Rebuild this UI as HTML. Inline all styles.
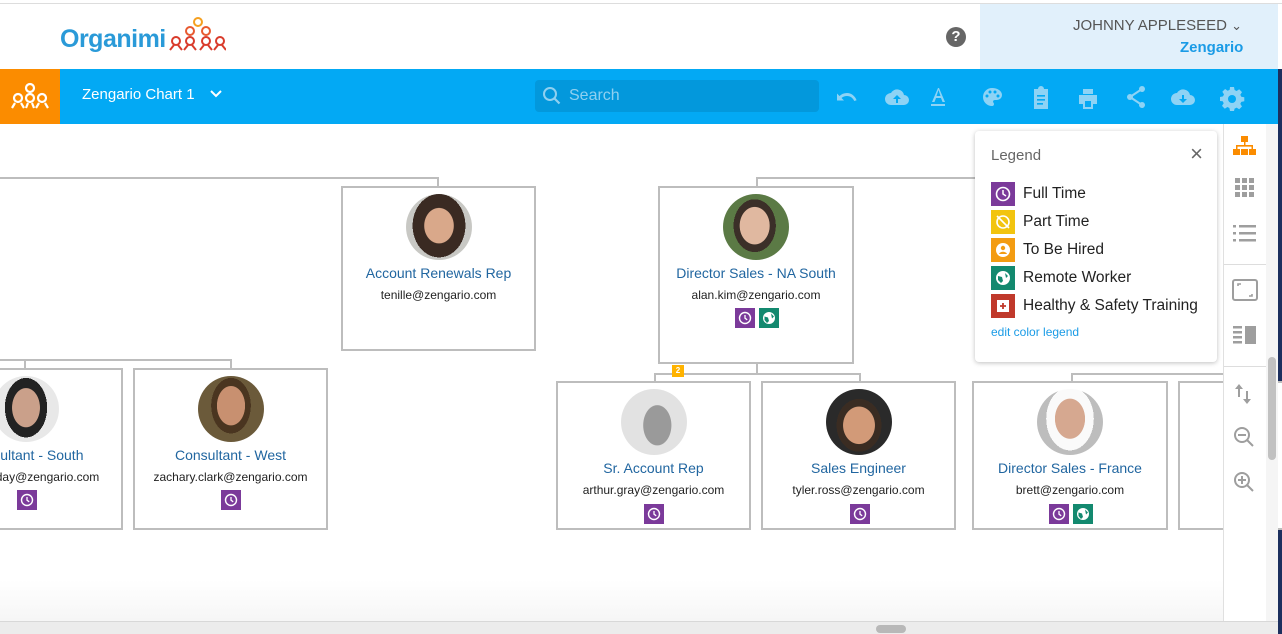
<!DOCTYPE html>
<html><head><meta charset="utf-8"><style>
*{box-sizing:border-box;margin:0;padding:0}
body{width:1282px;height:634px;overflow:hidden;position:relative;background:#fff;font-family:"Liberation Sans",Arial,sans-serif}
.a{position:absolute}
.card{position:absolute;border:2px solid #bdbdbd;background:#fff;text-align:center}
.av{position:absolute;border-radius:50%;width:66px;height:66px;left:50%;margin-left:-33px;top:6px;overflow:hidden}
.t{position:absolute;left:-40px;right:-40px;color:#2166a0;font-size:14px;white-space:nowrap}
.e{position:absolute;left:-40px;right:-40px;color:#222;font-size:12px;white-space:nowrap}
.ic{position:absolute;width:20px;height:20px;top:0;display:flex;align-items:center;justify-content:center}
.ln{position:absolute;background:#bdbdbd}
.lg{display:flex;align-items:center;height:28px;font-size:15.5px;color:#222;white-space:nowrap}
.sw{width:24px;height:24px;margin-right:8px;display:flex;align-items:center;justify-content:center;flex:none}
</style></head><body>
<svg width="0" height="0" style="position:absolute"><defs>
<g id="clk"><circle cx="7" cy="7" r="5.5" stroke="#fff" stroke-width="1.4" fill="none"/><path d="M7 4v3.2l2.2 1.6" stroke="#fff" stroke-width="1.3" fill="none"/></g>
<g id="glb"><circle cx="7" cy="7" r="6" fill="#fff"/><path d="M2.5 5.5l3.5 1 1 3.5-2 2-2.5-3zM9 2.5l3 3-2 2z" fill="#13896f"/></g>
</defs></svg>
<!-- top bar -->
<div class="a" style="left:0;top:0;width:1282px;height:4px;background:#fff;border-bottom:1px solid #ddd"></div>
<div class="a" style="left:60px;top:25px;font-size:25px;color:#2a9ad8;font-weight:bold;letter-spacing:-0.5px">Organimi</div>
<svg class="a" style="left:168px;top:16px" width="58" height="36" viewBox="0 0 58 36" fill="none" stroke-width="2">
<circle cx="30" cy="6" r="4" stroke="#f5a020"/>
<circle cx="22" cy="15" r="4" stroke="#e85a30"/><circle cx="38" cy="15" r="4" stroke="#e85a30"/>
<circle cx="8" cy="25" r="4" stroke="#d93b2b"/><circle cx="22" cy="25" r="4" stroke="#d93b2b"/><circle cx="38" cy="25" r="4" stroke="#d93b2b"/><circle cx="52" cy="25" r="4" stroke="#d93b2b"/>
<path d="M2 34l4-5M14 34l-4-5M16 34l4-5M28 34l-4-5M32 34l4-5M44 34l-4-5M46 34l4-5M58 34l-4-5" stroke="#d93b2b"/>
</svg>
<div class="a" style="left:946px;top:27px;width:20px;height:20px;border-radius:50%;background:#666;color:#fff;font-weight:bold;font-size:15px;text-align:center;line-height:20px">?</div>
<div class="a" style="left:980px;top:4px;width:298px;height:65px;background:#e1f0fb"></div>
<div class="a" style="right:40px;top:17px;font-size:15px;color:#555">JOHNNY APPLESEED <span style="font-size:13px">&#8964;</span></div>
<div class="a" style="left:1180px;top:39px;font-size:15px;color:#1a9be6;font-weight:bold">Zengario</div>
<div class="a" style="left:1278px;top:69px;width:4px;height:565px;background:#1c2f5e"></div>
<!-- toolbar -->
<div class="a" style="left:0;top:69px;width:1278px;height:55px;background:#03a9f4"></div>
<div class="a" style="left:0;top:69px;width:60px;height:55px;background:#fb8c00"></div>
<svg class="a" style="left:10px;top:82px" width="40" height="28" viewBox="0 0 40 28" fill="none" stroke="#fff" stroke-width="2.2">
<circle cx="20" cy="6" r="4"/><circle cx="8" cy="16" r="4"/><circle cx="20" cy="16" r="4"/><circle cx="32" cy="16" r="4"/>
<path d="M2 26l3-5M14 26l-3-5M16 26l2-5M24 26l-2-5M26 26l3-5M38 26l-3-5"/></svg>
<div class="a" style="left:82px;top:86px;font-size:15px;color:#fff">Zengario Chart 1</div>
<svg class="a" style="left:209px;top:89px" width="14" height="10"><path d="M2 2l5 5 5-5" stroke="#fff" stroke-width="2" fill="none"/></svg>
<div class="a" style="left:535px;top:80px;width:284px;height:32px;border-radius:4px;background:#0398dc"></div>
<svg class="a" style="left:542px;top:86px" width="20" height="20"><circle cx="8" cy="8" r="6" stroke="#8fd0f0" stroke-width="2" fill="none"/><path d="M12.5 12.5l5 5" stroke="#8fd0f0" stroke-width="2.2"/></svg>
<div class="a" style="left:569px;top:87px;font-size:16px;color:#8fd0f0">Search</div>
<svg class="a" style="left:830px;top:80px" width="420" height="34" fill="#8ed3f5">
<path transform="translate(5,7)" d="M12 6c-3 0-5.5 1-7.5 3L2 6.5v7h7L6.5 11c1.5-1.3 3.4-2 5.5-2 3.3 0 6 2 7.2 5l2.4-.8C20 9 16.3 6 12 6z"/>
<g transform="translate(55,5)"><path d="M19 10a7 7 0 0 0-13-2 6 6 0 0 0 0 12h13a5 5 0 0 0 0-10z"/><path d="M12 10l-4 4h3v4h2v-4h3z" fill="#03a9f4"/></g>
<path d="M108 8l-6 14h2.5l1.5-4h5l1.5 4H115l-6-14zm-1.5 8l2-6 2 6z M101 24h14v2h-14z"/>
<g transform="translate(150,5)"><path d="M12 3a9 9 0 0 0 0 18c1.5 0 2-1 2-2s-1-1.5-1-2.5 1-1.5 2-1.5h2a5 5 0 0 0 5-5c0-4-4.5-7-10-7z"/><circle cx="7" cy="11" r="1.5" fill="#03a9f4"/><circle cx="10" cy="7" r="1.5" fill="#03a9f4"/><circle cx="15" cy="7" r="1.5" fill="#03a9f4"/><circle cx="18" cy="11" r="1.5" fill="#03a9f4"/></g>
<g transform="translate(199,5)"><path d="M5 4h4a3 3 0 0 1 6 0h4v20H5z"/><path d="M8 10h8v1.6H8zM8 14h8v1.6H8zM8 18h6v1.6H8z" fill="#03a9f4"/></g>
<g transform="translate(246,5)"><path d="M7 4h10v5H7zM3 10h18v9h-4v5H7v-5H3z"/><path d="M9 16h6v6H9z" fill="#03a9f4"/></g>
<g transform="translate(294,5)"><circle cx="18" cy="4" r="3"/><circle cx="6" cy="12" r="3"/><circle cx="18" cy="20" r="3"/><path d="M6 12L18 4M6 12l12 8" stroke="#8ed3f5" stroke-width="2"/></g>
<g transform="translate(341,5)"><path d="M19 10a7 7 0 0 0-13-2 6 6 0 0 0 0 12h13a5 5 0 0 0 0-10z"/><path d="M12 18l-4-4h3v-4h2v4h3z" fill="#03a9f4"/></g>
<g transform="translate(390,5)"><path d="M10 2h4l.6 3 2 1 2.6-1.7 2.8 2.8-1.7 2.6 1 2 3 .6v4l-3 .6-1 2 1.7 2.6-2.8 2.8-2.6-1.7-2 1L14 26h-4l-.6-3-2-1-2.6 1.7-2.8-2.8 1.7-2.6-1-2L0 16v-4l3-.6 1-2L2.3 6.8l2.8-2.8 2.6 1.7 2-1z"/><circle cx="12" cy="14" r="4" fill="#03a9f4"/></g>
</svg>
<!-- connectors -->
<div class="ln" style="left:0;top:177px;width:439px;height:2px"></div>
<div class="ln" style="left:437px;top:177px;width:2px;height:10px"></div>
<div class="ln" style="left:756px;top:177px;width:220px;height:2px"></div>
<div class="ln" style="left:756px;top:177px;width:2px;height:10px"></div>
<div class="ln" style="left:0;top:359px;width:232px;height:2px"></div>
<div class="ln" style="left:24px;top:359px;width:2px;height:10px"></div>
<div class="ln" style="left:230px;top:359px;width:2px;height:10px"></div>
<div class="ln" style="left:756px;top:362px;width:2px;height:12px"></div>
<div class="ln" style="left:654px;top:373px;width:207px;height:2px"></div>
<div class="ln" style="left:654px;top:373px;width:2px;height:9px"></div>
<div class="ln" style="left:859px;top:373px;width:2px;height:9px"></div>
<div class="ln" style="left:1071px;top:373px;width:152px;height:2px"></div>
<div class="ln" style="left:1071px;top:373px;width:2px;height:9px"></div>
<div class="a" style="left:672px;top:365px;width:12px;height:12px;background:#ffb300;color:#fff;font-size:8px;font-weight:bold;text-align:center;line-height:12px">2</div>
<!-- cards -->
<div class="card" style="left:341px;top:186px;width:195px;height:165px">
<div class="av" style="background:radial-gradient(ellipse 40% 48% at 50% 48%,#d9a88a 0 55%,#3a2a22 57% 100%,#c8c8c4 100%)"></div>
<div class="t" style="top:77px">Account Renewals Rep</div><div class="e" style="top:100px">tenille@zengario.com</div></div>

<div class="card" style="left:658px;top:186px;width:196px;height:178px">
<div class="av" style="background:radial-gradient(ellipse 32% 40% at 48% 48%,#e0b8a0 0 70%,#3b2f28 72% 100%,#5b7a45 100%)"></div>
<div class="t" style="top:77px">Director Sales - NA South</div><div class="e" style="top:100px">alan.kim@zengario.com</div>
<div class="ic" style="left:75px;top:120px;background:#7b3a9a"><svg width="14" height="14"><use href="#clk"/></svg></div><div class="ic" style="left:99px;top:120px;background:#13896f"><svg width="14" height="14"><use href="#glb"/></svg></div></div>

<div class="card" style="left:-72px;top:368px;width:195px;height:162px">
<div class="av" style="background:radial-gradient(ellipse 32% 45% at 50% 48%,#caa08a 0 65%,#222 67% 100%,#e8e8e8 100%)"></div>
<div class="t" style="top:77px">Consultant - South</div><div class="e" style="top:100px">jake.holiday@zengario.com</div>
<div class="ic" style="left:87px;top:120px;background:#7b3a9a"><svg width="14" height="14"><use href="#clk"/></svg></div></div>

<div class="card" style="left:133px;top:368px;width:195px;height:162px">
<div class="av" style="background:radial-gradient(ellipse 30% 42% at 50% 45%,#c89070 0 70%,#4a3520 72% 100%,#6b5a3a 100%)"></div>
<div class="t" style="top:77px">Consultant - West</div><div class="e" style="top:100px">zachary.clark@zengario.com</div>
<div class="ic" style="left:86px;top:120px;background:#7b3a9a"><svg width="14" height="14"><use href="#clk"/></svg></div></div>

<div class="card" style="left:556px;top:381px;width:195px;height:149px">
<div class="av" style="background:radial-gradient(ellipse 35% 50% at 55% 55%,#9a9a9a 0 60%,#e2e2e2 62%)"></div>
<div class="t" style="top:77px">Sr. Account Rep</div><div class="e" style="top:100px">arthur.gray@zengario.com</div>
<div class="ic" style="left:86px;top:121px;background:#7b3a9a"><svg width="14" height="14"><use href="#clk"/></svg></div></div>

<div class="card" style="left:761px;top:381px;width:195px;height:149px">
<div class="av" style="background:radial-gradient(ellipse 34% 40% at 50% 55%,#d29a78 0 70%,#3a2c22 72% 100%,#2a2a2a 100%)"></div>
<div class="t" style="top:77px">Sales Engineer</div><div class="e" style="top:100px">tyler.ross@zengario.com</div>
<div class="ic" style="left:87px;top:121px;background:#7b3a9a"><svg width="14" height="14"><use href="#clk"/></svg></div></div>

<div class="card" style="left:972px;top:381px;width:196px;height:149px">
<div class="av" style="background:radial-gradient(ellipse 30% 40% at 50% 45%,#d6a890 0 75%,#fafafa 77% 120%,#bdbdbd 120%)"></div>
<div class="t" style="top:77px">Director Sales - France</div><div class="e" style="top:100px">brett@zengario.com</div>
<div class="ic" style="left:75px;top:121px;background:#7b3a9a"><svg width="14" height="14"><use href="#clk"/></svg></div><div class="ic" style="left:99px;top:121px;background:#13896f"><svg width="14" height="14"><use href="#glb"/></svg></div></div>

<div class="card" style="left:1178px;top:381px;width:120px;height:149px"></div>
<!-- legend -->
<div class="a" style="left:975px;top:131px;width:242px;height:231px;background:#fff;border-radius:4px;box-shadow:0 1px 5px rgba(0,0,0,.25);padding:16px 16px">
<div style="font-size:15px;color:#666;margin-bottom:16px;position:relative">Legend<span style="position:absolute;right:-2px;top:-6px;font-size:22px;color:#666">×</span></div>
<div class="lg"><div class="sw" style="background:#7b3a9a"><svg width="16" height="16"><circle cx="8" cy="8" r="6.5" stroke="#fff" stroke-width="1.6" fill="none"/><path d="M8 4v4l3 2" stroke="#fff" stroke-width="1.5" fill="none"/></svg></div>Full Time</div>
<div class="lg"><div class="sw" style="background:#f2c40f"><svg width="16" height="16"><circle cx="8" cy="8" r="6" stroke="#fff" stroke-width="1.6" fill="none"/><path d="M2 2l12 12" stroke="#fff" stroke-width="1.6"/></svg></div>Part Time</div>
<div class="lg"><div class="sw" style="background:#f39c12"><svg width="16" height="16"><circle cx="8" cy="8" r="7" fill="#fff"/><circle cx="8" cy="6" r="2.2" fill="#f39c12"/><path d="M4 12c1-3 7-3 8 0z" fill="#f39c12"/></svg></div>To Be Hired</div>
<div class="lg"><div class="sw" style="background:#13896f"><svg width="16" height="16"><circle cx="8" cy="8" r="7" fill="#fff"/><path d="M3 6l4 1 1 4-2 2-3-3zM10 3l3 3-2 2z" fill="#13896f"/></svg></div>Remote Worker</div>
<div class="lg"><div class="sw" style="background:#c0392b"><svg width="16" height="16"><rect x="2" y="2" width="12" height="12" fill="#fff"/><path d="M8 5v6M5 8h6" stroke="#c0392b" stroke-width="1.8"/></svg></div>Healthy &amp; Safety Training</div>
<div style="font-size:12px;color:#1a9be6;margin-top:5px">edit color legend</div>
</div>
<!-- right sidebar -->
<div class="a" style="left:1223px;top:124px;width:43px;height:497px;background:#fff;border-left:1px solid #e0e0e0"></div>
<div class="a" style="left:1224px;top:264px;width:42px;height:1px;background:#ddd"></div>
<div class="a" style="left:1224px;top:366px;width:42px;height:1px;background:#ddd"></div>
<svg class="a" style="left:1230px;top:134px" width="30" height="370" fill="#9e9e9e">
<g fill="#fb8c00"><rect x="11" y="2" width="7" height="6"/><rect x="3" y="15" width="7" height="6"/><rect x="11" y="15" width="7" height="6"/><rect x="19" y="15" width="7" height="6"/><path d="M14 8h1.5v4H14zM6 11h17v1.6H6zM6 11h1.5v4H6zM21.5 11H23v4h-1.5z"/></g>
<g transform="translate(5,44)"><rect width="5" height="5"/><rect x="7" width="5" height="5"/><rect x="14" width="5" height="5"/><rect y="7" width="5" height="5"/><rect x="7" y="7" width="5" height="5"/><rect x="14" y="7" width="5" height="5"/><rect y="14" width="5" height="5"/><rect x="7" y="14" width="5" height="5"/><rect x="14" y="14" width="5" height="5"/></g>
<g transform="translate(3,91)"><rect width="3" height="2.5"/><rect x="6" width="17" height="2.5"/><rect y="7" width="3" height="2.5"/><rect x="6" y="7" width="17" height="2.5"/><rect y="14" width="3" height="2.5"/><rect x="6" y="14" width="17" height="2.5"/></g>
<rect x="3" y="146" width="24" height="20" rx="2" fill="none" stroke="#9e9e9e" stroke-width="2"/><path d="M8 152v-2h3M22 160v2h-3" stroke="#9e9e9e" stroke-width="1.6" fill="none"/>
<g transform="translate(3,192)"><rect width="9" height="2.5"/><rect y="5" width="9" height="2.5"/><rect y="10" width="9" height="2.5"/><rect y="15" width="9" height="2.5"/><rect x="12" width="11" height="18"/></g>
<path d="M9 250l-4 5h3v8h2v-8h3zM17 270l4-5h-3v-8h-2v8h-3z"/>
<g fill="none" stroke="#9e9e9e" stroke-width="2"><circle cx="12" cy="301" r="7"/><path d="M17 306l6 6M8 301h8"/><circle cx="12" cy="346" r="7"/><path d="M17 351l6 6M8 346h8M12 342v8"/></g>
</svg>
<div class="a" style="left:1266px;top:124px;width:12px;height:497px;background:#f5f5f5"></div>
<div class="a" style="left:1268px;top:357px;width:8px;height:103px;border-radius:4px;background:#c1c1c1"></div>
<!-- bottom -->
<div class="a" style="left:0;top:580px;width:1223px;height:41px;background:linear-gradient(#fff,#f6f6f6)"></div>
<div class="a" style="left:0;top:621px;width:1278px;height:13px;background:#ececec;border-top:1px solid #d8d8d8"></div>
<div class="a" style="left:876px;top:625px;width:30px;height:8px;border-radius:4px;background:#b8b8b8"></div>
</body></html>
